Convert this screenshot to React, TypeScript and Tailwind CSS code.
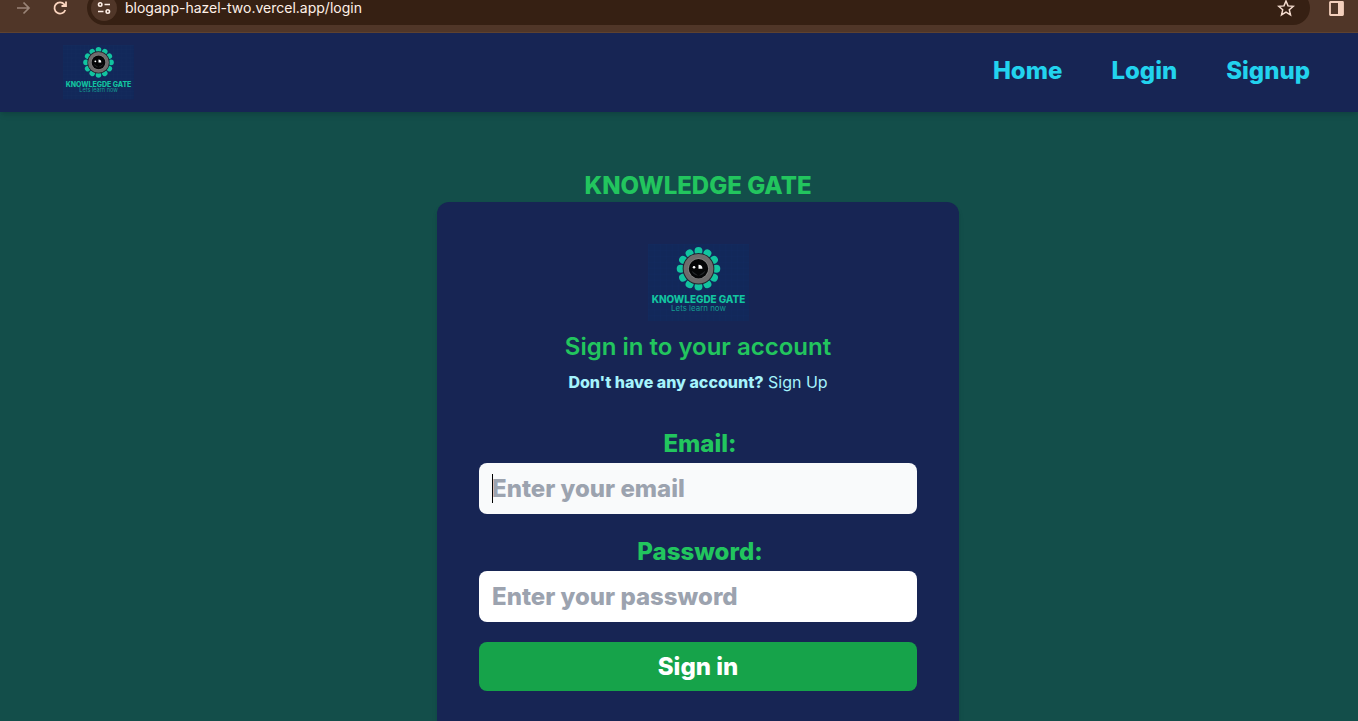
import React from "react";

interface FieldProps {
  id: string;
  label: string;
  type: string;
  placeholder: string;
  active?: boolean;
}

const petals = Array.from({ length: 12 }, (_, i) => i * 30);

const navLinks = [
  { title: "Home", href: "/" },
  { title: "Login", href: "/login" },
  { title: "Signup", href: "/signup" },
];

const Logo: React.FC<{ className: string }> = ({ className }) => {
  return (
    <svg viewBox="0 0 102 78" className={className} role="img" aria-label="Knowledge Gate">
      <defs>
        <pattern id="grid" width="6" height="6" patternUnits="userSpaceOnUse">
          <path d="M6 0H0V6" fill="none" stroke="#152d62" strokeWidth="0.5" />
        </pattern>
      </defs>
      <rect width="102" height="78" fill="#12285a" />
      <rect width="102" height="78" fill="url(#grid)" />
      {petals.map((angle) => (
        <circle key={angle} cx="51" cy="7" r="4" fill="#12c4a0" transform={`rotate(${angle} 51 25)`} />
      ))}
      <circle cx="51" cy="25" r="16" fill="#20242b" />
      <circle cx="51" cy="25" r="15" fill="#6e6c6c" />
      <circle cx="51" cy="25" r="10.5" fill="#8a8888" />
      <circle cx="51" cy="25" r="9.8" fill="#050607" />
      <path d="M44 27a7.5 7.5 0 0 0 14 0l-7 5z" fill="#24272a" />
      <circle cx="46.5" cy="23.5" r="1.3" fill="#fff" />
      <path d="M51 21c2.500 0 4 1.500 4 4h-4z" fill="#fff" />
      <text x="51" y="60" textAnchor="middle" fontSize="10" fontWeight="800" fill="#12c4a0" fontFamily="Inter, sans-serif">
        KNOWLEGDE GATE
      </text>
      <text x="51" y="68" textAnchor="middle" fontSize="8" fill="#149c92" fontFamily="Inter, sans-serif">
        Lets learn now
      </text>
    </svg>
  );
};

const BrowserBar = () => {
  return (
    <div className="flex h-[33px] items-end gap-[19px] overflow-hidden border-b border-[#5f4331] bg-[#503628] pr-[14px] pb-[7px] pl-[14px]">
      <div className="flex h-[34px] items-center gap-[20px]">
        <button type="button" aria-label="Forward" className="text-[#9a8478]">
          <svg width="18" height="18" viewBox="0 0 18 18" fill="none" stroke="currentColor" strokeWidth="1.700">
            <path d="M3 9h12M9.500 3.500 15 9l-5.500 5.500" />
          </svg>
        </button>
        <button type="button" aria-label="Reload" className="text-[#fbd5bf]">
          <svg width="16" height="16" viewBox="0 0 16 16" fill="none" stroke="currentColor" strokeWidth="1.800">
            <path d="M13.300 10A5.600 5.600 0 1 1 12.300 4.300L14 6M14 1.500V6H9.500" />
          </svg>
        </button>
      </div>
      <div className="flex h-[34px] flex-1 items-center gap-[8px] rounded-full bg-[#362013] pr-[15px] pl-[4px]">
        <button
          type="button"
          aria-label="Site information"
          className="flex size-[26px] items-center justify-center rounded-full bg-[#503628] text-[#fff0e8]"
        >
          <svg width="14" height="14" viewBox="0 0 14 14" fill="none" stroke="currentColor" strokeWidth="1.600">
            <circle cx="3.200" cy="3.500" r="1.700" />
            <path d="M7.500 3.500H13M1 10.500h5.500" />
            <circle cx="10.800" cy="10.500" r="1.700" />
          </svg>
        </button>
        <span className="flex-1 text-[14px] leading-none text-[#fff0e8] font-[Inter,sans-serif]">
          blogapp-hazel-two.vercel.app/login
        </span>
        <button type="button" aria-label="Bookmark" className="text-[#f5dccf]">
          <svg width="18" height="18" viewBox="0 0 18 18" fill="none" stroke="currentColor" strokeWidth="1.500">
            <path d="m9 2 2 4.900 5.300.4-4 3.500 1.200 5.200L9 13.200 4.500 16l1.200-5.200-4-3.500L7 6.900z" />
          </svg>
        </button>
      </div>
      <button type="button" aria-label="Side panel" className="flex h-[34px] items-center text-[#f3cfbc]">
        <svg width="15" height="15" viewBox="0 0 15 15" fill="none">
          <rect x="1" y="1" width="13" height="13" rx="0.500" stroke="currentColor" strokeWidth="1.800" />
          <path d="M9 1h5v13H9z" fill="currentColor" />
        </svg>
      </button>
    </div>
  );
};

const Navbar = () => {
  return (
    <header className="relative flex h-[79px] items-center justify-between bg-[#172554] pr-[48px] pl-[63px] shadow-md">
      <a href="/">
        <Logo className="w-[71px]" />
      </a>
      <nav className="flex gap-[49px] pb-1">
        {navLinks.map((link) => (
          <a key={link.title} href={link.href} className="text-[24px] leading-[36px] font-extrabold text-[#22d3ee]">
            {link.title}
          </a>
        ))}
      </nav>
    </header>
  );
};

const Field: React.FC<FieldProps> = ({ id, label, type, placeholder, active }) => {
  return (
    <div>
      <label htmlFor={id} className="block pb-[2px] pl-1 text-center text-[24px] leading-[35px] font-extrabold text-[#22c55e]">
        {label}
      </label>
      <div className="relative">
        <input
          id={id}
          type={type}
          placeholder={placeholder}
          className={`block h-[51px] w-full rounded-lg px-[13px] text-[24px] font-extrabold text-gray-900 outline-none placeholder:text-[#9ca3af] ${
            active ? "bg-[#f9fafb]" : "bg-white"
          }`}
        />
        {active && <span className="absolute top-[11px] left-[13px] h-[29px] w-px bg-black" />}
      </div>
    </div>
  );
};

const LoginForm = () => {
  return (
    <div className="w-[522px] rounded-xl bg-[#172554] px-[42px] pt-[42px] pb-[42px] shadow-md">
      <Logo className="mx-auto w-[101px]" />
      <h2 className="mt-[7px] text-center text-[24px] leading-[37px] font-semibold text-[#22c55e]">Sign in to your account</h2>
      <p className="mt-[4px] text-center text-[16px] leading-[26px] text-[#a5f3fc]">
        <span className="font-extrabold">Don't have any account?</span>{" "}
        <a href="/signup">Sign Up</a>
      </p>
      <form className="mt-[31px] flex flex-col gap-[20px]" onSubmit={(e) => e.preventDefault()}>
        <Field id="email" label="Email:" type="email" placeholder="Enter your email" active />
        <Field id="password" label="Password:" type="password" placeholder="Enter your password" />
        <button type="submit" className="h-[49px] rounded-lg bg-[#16a34a] text-[24px] font-extrabold text-white">
          Sign in
        </button>
      </form>
    </div>
  );
};

const App = () => {
  return (
    <div className="flex h-screen flex-col overflow-hidden bg-[#134e4a] font-[Inter,sans-serif]">
      <div className="shrink-0">
        <BrowserBar />
        <Navbar />
      </div>
      <main className="flex flex-col items-center pt-[58px] pl-[38px]">
        <h1 className="text-[24px] leading-[32px] font-extrabold text-[#22c55e]">KNOWLEDGE GATE</h1>
        <LoginForm />
      </main>
    </div>
  );
};

export default App;
